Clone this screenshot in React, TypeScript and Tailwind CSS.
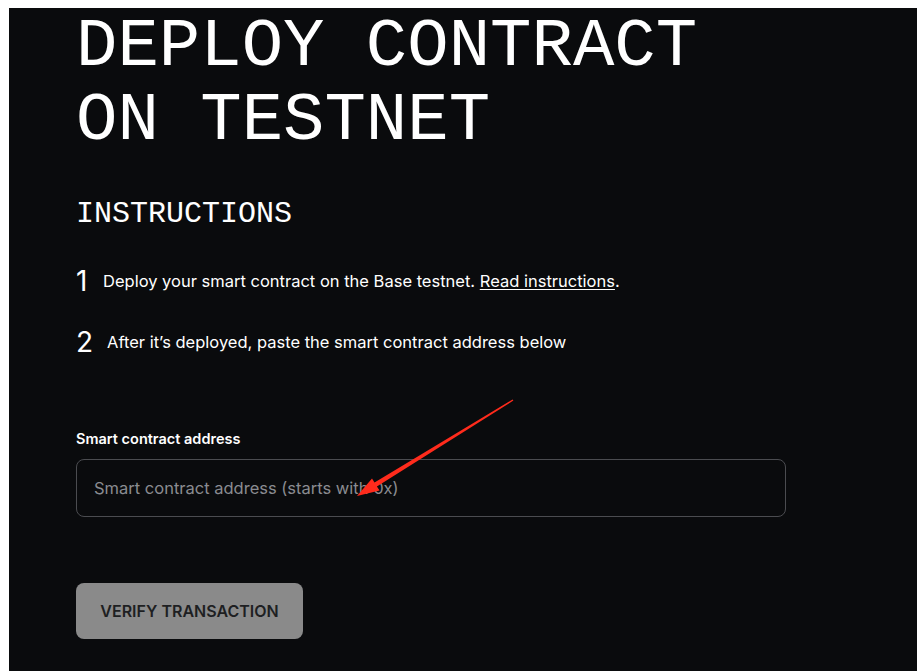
import React from "react";

const mono = { fontFamily: '"Liberation Mono", "DejaVu Sans Mono", monospace' };

function Step({ n, children }: { n: string; children: React.ReactNode }) {
  return (
    <li className="flex items-center gap-[14px]">
      <span className="min-w-[13px] text-[28px] leading-none text-white">{n}</span>
      <span className="text-[16.5px] text-white">{children}</span>
    </li>
  );
}

export default function App() {
  return (
    <div
      className="relative h-[671px] w-[917px] overflow-hidden bg-white pt-[8px] pl-[9px]"
      style={{ fontFamily: '"Inter", "Noto Sans", sans-serif' }}
    >
      <main className="h-full bg-[#0a0b0d] pl-[67px]">
        {/* Title */}
        <h1
          className="text-[69px] leading-[74px] font-normal text-white tracking-normal pt-[2px]"
          style={mono}
        >
          DEPLOY CONTRACT
          <br />
          ON TESTNET
        </h1>

        {/* Instructions */}
        <h2 className="mt-[38px] text-[30px] leading-[36px] text-white" style={mono}>
          INSTRUCTIONS
        </h2>
        <ol className="mt-[35px] flex flex-col gap-[33px]">
          <Step n="1">
            Deploy your smart contract on the Base testnet.{" "}
            <a href="#" className="underline underline-offset-2">
              Read instructions
            </a>
            .
          </Step>
          <Step n="2">After it’s deployed, paste the smart contract address below</Step>
        </ol>

        {/* Address input */}
        <label className="mt-[72px] block text-[14.5px] font-semibold text-white">
          Smart contract address
        </label>
        <input
          className="mt-[9px] block h-[58px] w-[710px] rounded-[8px] border border-[#4b4c50] bg-transparent px-[17px] text-[16.5px] text-white placeholder:text-[#8a8c91] outline-none"
          placeholder="Smart contract address (starts with 0x)"
        />

        <button className="mt-[66px] h-[56px] w-[227px] rounded-[8px] bg-[#8a8a8a] text-[16px] font-semibold text-[#1e1f22]">
          VERIFY TRANSACTION
        </button>
      </main>

      {/* red annotation arrow */}
      <svg
        className="pointer-events-none absolute inset-0"
        width="917"
        height="671"
        viewBox="0 0 917 671"
      >
        <polygon
          fill="#ff2b1c"
          points="513.4,400.5 376.9,486.4 379.6,490.6 357,496 372,478.4 374.5,482.6 512.6,399.5"
        />
      </svg>
    </div>
  );
}
